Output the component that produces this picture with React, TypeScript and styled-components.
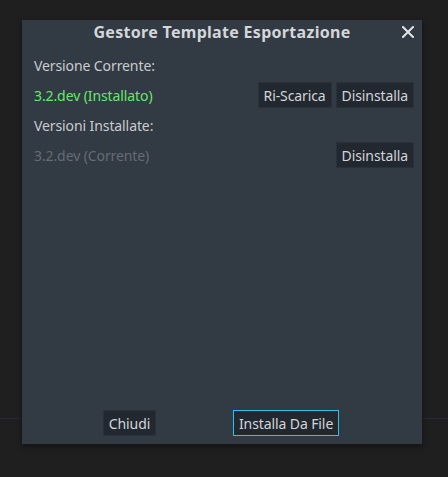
import styled, { createGlobalStyle } from 'styled-components'

const GlobalStyle = createGlobalStyle`
  html, body {
    margin: 0;
    padding: 0;
    background: #1f1f1f;
  }
  body {
    font-family: 'Noto Sans', 'DejaVu Sans', sans-serif;
  }
`

const Page = styled.div`
  position: relative;
  width: 448px;
  height: 477px;
  padding: 20px 0 0 22px;
  box-sizing: border-box;
  background: linear-gradient(to bottom, transparent 418px, #29263d 418px, #29263d 419px, transparent 419px), #1f1f1f;
`

const Dialog = styled.div`
  width: 400px;
  height: 424px;
  background: #323a43;
  box-shadow: 0 2px 6px rgba(0, 0, 0, 0.45);
  display: flex;
  flex-direction: column;
  box-sizing: border-box;
`

const Header = styled.div`
  position: relative;
  height: 32px;
  display: flex;
  align-items: center;
  justify-content: center;
  padding-bottom: 8px;
  box-sizing: border-box;
`

const Title = styled.div`
  font-weight: 700;
  font-size: 16px;
  letter-spacing: 0.3px;
  color: #d4d6d9;
`

const CloseButton = styled.button`
  position: absolute;
  top: 6px;
  right: 8px;
  width: 12px;
  height: 12px;
  padding: 0;
  border: 0;
  background: transparent;
  display: flex;
  cursor: pointer;
`

const Content = styled.div`
  flex: 1;
  display: flex;
  flex-direction: column;
  gap: 4px;
  padding: 0 8px 0 12px;
`

const Row = styled.div`
  height: 26px;
  display: flex;
  align-items: center;
  gap: 4px;
`

const Label = styled.span<{ $tone?: 'normal' | 'success' | 'muted' }>`
  flex: 1;
  font-size: 14px;
  letter-spacing: -0.1px;
  color: ${({ $tone }) => ($tone === 'success' ? '#67e86b' : $tone === 'muted' ? '#666c74' : '#c9cccf')};
`

const Button = styled.button<{ $focused?: boolean }>`
  height: 26px;
  padding: 0 5px;
  font-family: inherit;
  font-size: 14px;
  letter-spacing: -0.1px;
  color: #d3d5d8;
  background: #222830;
  border: 1px solid ${({ $focused }) => ($focused ? '#2ac3ef' : '#2b3139')};
  box-sizing: border-box;
  cursor: pointer;
`

const Footer = styled.div`
  display: flex;
  justify-content: space-evenly;
  margin: 0 6px 8px 4px;
`

const Close = () => (
  <svg width='12' height='12' viewBox='0 0 12 12'>
    <path d='M1 1L11 11M11 1L1 11' stroke='#e2e4e6' strokeWidth='2' strokeLinecap='square' />
  </svg>
)

const App = () => {
  return (
    <>
      <GlobalStyle />
      <Page>
        <Dialog>
          <Header>
            <Title>Gestore Template Esportazione</Title>
            <CloseButton aria-label='Chiudi'>
              <Close />
            </CloseButton>
          </Header>
          <Content>
            <Row>
              <Label>Versione Corrente:</Label>
            </Row>
            <Row>
              <Label $tone='success'>3.2.dev (Installato)</Label>
              <Button>Ri-Scarica</Button>
              <Button>Disinstalla</Button>
            </Row>
            <Row>
              <Label>Versioni Installate:</Label>
            </Row>
            <Row>
              <Label $tone='muted'>3.2.dev (Corrente)</Label>
              <Button>Disinstalla</Button>
            </Row>
          </Content>
          <Footer>
            <Button>Chiudi</Button>
            <Button $focused>Installa Da File</Button>
          </Footer>
        </Dialog>
      </Page>
    </>
  )
}

export default App
